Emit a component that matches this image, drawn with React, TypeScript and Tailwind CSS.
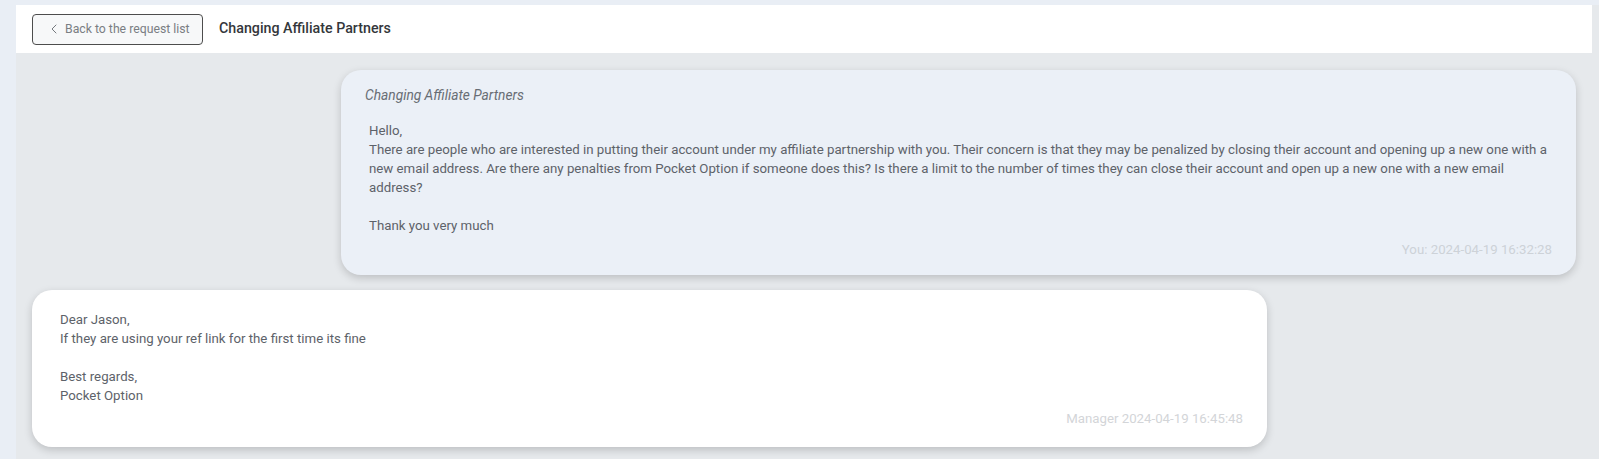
import { ChevronLeft } from 'lucide-react';

const body = [
  'Hello,',
  'There are people who are interested in putting their account under my affiliate partnership with you. Their concern is that they may be penalized by closing their account and opening up a new one with a new email address. Are there any penalties from Pocket Option if someone does this? Is there a limit to the number of times they can close their account and open up a new one with a new email address?',
  '',
  'Thank you very much',
];

const reply = ['Dear Jason,', 'If they are using your ref link for the first time its fine', '', 'Best regards,', 'Pocket Option'];

function Lines({ lines }: { lines: string[] }) {
  return (
    <div className="text-[13.25px] leading-[19px] text-[#5d6269]">
      {lines.map((l, i) => (
        <p key={i} className="min-h-[19px]">{l}</p>
      ))}
    </div>
  );
}

export default function App() {
  return (
    <div className="flex h-[459px] w-full bg-[#e9eef5] pt-[5px] pl-4 font-['Roboto',sans-serif]">
      <div className="flex flex-1 flex-col bg-[#e6e9ec]">
        <div className="mr-[7px] flex h-12 items-center gap-4 bg-white px-4">
          <button className="flex h-[31px] w-[171px] items-center gap-[3px] rounded-[4px] border border-[#4d4d4d] bg-[#f7f8f9] pl-[13px] text-[12.25px] text-[#7a7e83]">
            <ChevronLeft size={16} strokeWidth={1.4} className="text-[#6b6f74]" />
            Back to the request list
          </button>
          <h1 className="text-[14.25px] font-medium text-[#34373b]">Changing Affiliate Partners</h1>
        </div>

        <div className="mt-[17px] mr-[23px] ml-[325px] rounded-[20px] bg-[#ebf0f7] px-6 pt-4 pb-4 shadow-[0_3px_8px_rgba(0,0,0,0.18)]">
          <p className="text-[13.75px] leading-[19px] text-[#686d74] italic">Changing Affiliate Partners</p>
          <div className="mt-4 pl-1">
            <Lines lines={body} />
          </div>
          <p className="mt-[5px] text-right text-[13.25px] leading-[19px] text-[#cdd2d8]">You: 2024-04-19 16:32:28</p>
        </div>

        <div className="mt-[15px] ml-4 w-[1235px] rounded-[20px] bg-white pt-5 pr-6 pb-[19px] pl-7 shadow-[0_3px_8px_rgba(0,0,0,0.18)]">
          <Lines lines={reply} />
          <p className="mt-[4px] text-right text-[13.25px] leading-[19px] text-[#d3d5d8]">Manager 2024-04-19 16:45:48</p>
        </div>
      </div>
    </div>
  );
}
